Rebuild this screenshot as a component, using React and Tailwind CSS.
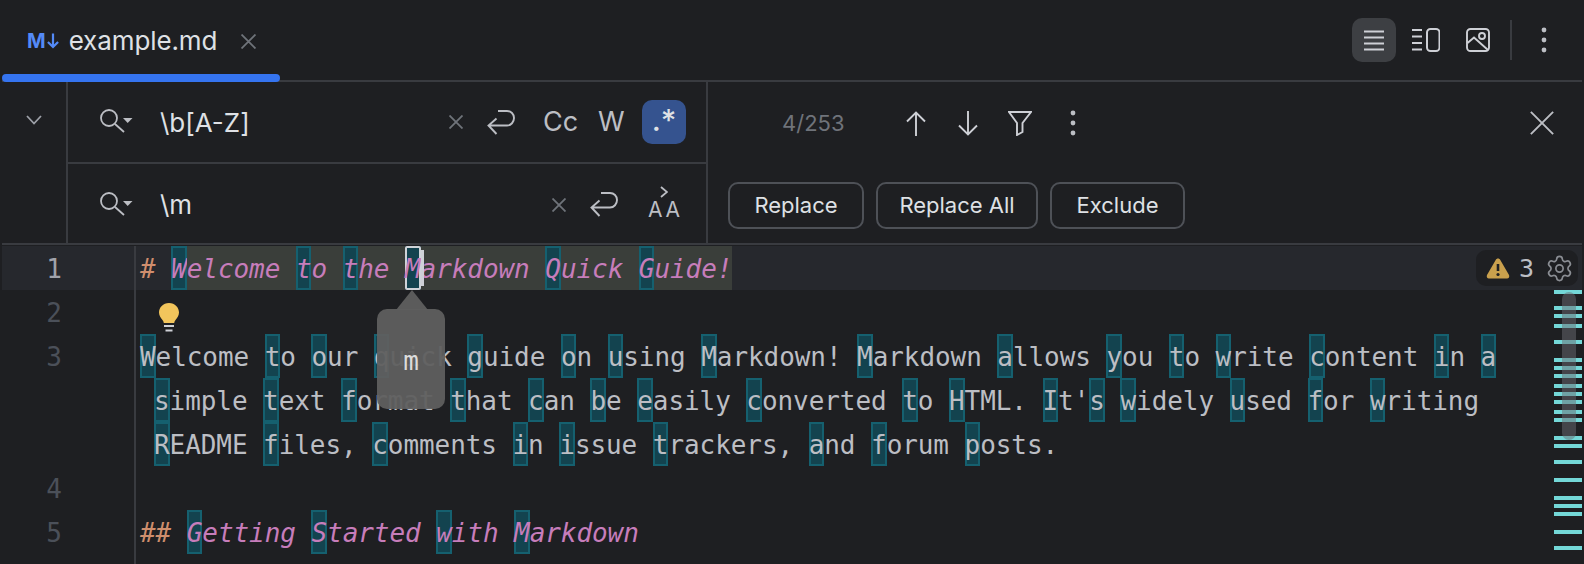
import React from "react";
import { Settings } from "lucide-react";

const MARKS = [290, 306, 314, 324, 340, 358, 366, 374, 384, 392, 400, 410, 418, 436, 444, 460, 478, 496, 504, 512, 530, 546];

function tokens(text) {
  const out = [];
  let i = 0;
  const re = /\b\w/g;
  let m;
  while ((m = re.exec(text))) {
    if (m.index > i) out.push({ t: text.slice(i, m.index), m: false });
    out.push({ t: m[0], m: true });
    i = m.index + 1;
    const next = text.slice(i).search(/\W/);
    if (next < 0) { out.push({ t: text.slice(i), m: false }); i = text.length; break; }
    out.push({ t: text.slice(i, i + next), m: false });
    i += next;
    re.lastIndex = i;
  }
  if (i < text.length) out.push({ t: text.slice(i), m: false });
  return out;
}

const MATCH = "inline-block h-[44px] align-top bg-[#13434f] shadow-[inset_0_0_0_2px_#15606f]";

function Plain({ text }) {
  return tokens(text).map((k, i) =>
    k.m ? <span key={i} className={MATCH}>{k.t}</span> : <span key={i}>{k.t}</span>
  );
}

function Heading({ hashes, text, selected }) {
  let first = true;
  return (
    <>
      <span className="text-[#cf8e6d] italic">{hashes} </span>
      <span className="text-[#c77dbb] italic">
        {tokens(text).map((k, i) => {
          const isFirst = k.m && first;
          if (k.m) first = false;
          if (k.m && selected && k.t === "M") {
            return (
              <span key={i} className="relative inline-block h-[44px] align-top bg-[#13434f] shadow-[inset_0_0_0_2px_#cfd3d8] rounded-[2px]">
                {k.t}
                <span className="absolute left-full top-[4px] h-[36px] w-[3px] bg-[#ced0d6]" />
              </span>
            );
          }
          if (k.m) return <span key={i} className={MATCH}>{k.t}</span>;
          return <span key={i} className={selected && !isFirst ? "inline-block h-[44px] align-top bg-[#3a3e3a]" : ""}>{k.t}</span>;
        })}
      </span>
    </>
  );
}

function Line({ num, children, current, indent }) {
  return (
    <div className={"flex h-[44px] " + (current ? "bg-[#26282d]" : "")}>
      <div className={"w-[134px] h-[44px] shrink-0 border-r-2 border-[#393b40] pr-[72px] text-right leading-[47px] " + (current ? "text-[#a1a3ab]" : "text-[#4b5059]")}>
        {num}
      </div>
      <div className={"h-[44px] leading-[47px] whitespace-pre tracking-[-0.07px] " + (indent ? "pl-[18px]" : "pl-[4px]")}>{children}</div>
    </div>
  );
}

const Cross = ({ size = 14, color = "#6f737a", w = 1.8 }) => (
  <svg width={size} height={size} viewBox="0 0 14 14" fill="none" stroke={color} strokeWidth={(w * 14) / size} className="shrink-0">
    <path d="M0.5 0.5 13.5 13.5M13.5 0.5 0.5 13.5" />
  </svg>
);

const Search = () => (
  <svg width="34" height="30" viewBox="0 0 34 30" fill="none" className="shrink-0">
    <circle cx="10" cy="11" r="8" stroke="#bcbec4" strokeWidth="1.8" />
    <path d="M16 17 25 25" stroke="#bcbec4" strokeWidth="1.8" />
    <path d="M24 11H33.5L28.7 16Z" fill="#bcbec4" />
  </svg>
);

const Enter = () => (
  <svg width="28" height="25" viewBox="0 0 28 25" fill="none" stroke="#bcbec4" strokeWidth="1.9" className="shrink-0">
    <path d="M11 1H20C24 1 27 4 27 8S24 15.500 20 15.500H2M9.500 8.500 1.500 15.500 9.500 24" />
  </svg>
);

const Dots = ({ color = "#bcbec4" }) => (
  <svg width="6" height="26" viewBox="0 0 6 26" className="shrink-0" fill={color}>
    <circle cx="3" cy="3" r="2.400" />
    <circle cx="3" cy="13" r="2.400" />
    <circle cx="3" cy="23" r="2.400" />
  </svg>
);

const BTN = "h-[47px] rounded-[10px] border-2 border-[#4e5157] text-[22px] text-[#dfe1e5] flex items-center justify-center shrink-0";

export default function App() {
  return (
    <div className="w-[1584px] h-[564px] overflow-hidden bg-[#1e1f22] px-[2px] font-['Inter',sans-serif]">
      {/* tab bar */}
      <div className="relative flex items-center h-[82px] border-b-2 border-[#393b40]">
        <div className="flex items-center pl-[25px] pt-[2px]">
          <span className="text-[20px] font-bold leading-none text-[#548af7]">M</span>
          <svg width="12" height="16" viewBox="0 0 13 16" fill="none" stroke="#548af7" strokeWidth="2.400" className="ml-[1px] shrink-0">
            <path d="M6.500 0V14.500M1 9 6.500 14.500 12 9" />
          </svg>
          <span className="ml-[10px] text-[26px] leading-none text-[#dfe1e5] tracking-[-0.1px]">example.md</span>
          <span className="ml-[24px] flex"><Cross size={15} /></span>
        </div>
        <div className="absolute left-0 bottom-[-2px] h-[8px] w-[278px] rounded-full bg-[#3574f0]" />
        <div className="ml-auto mr-[35px] flex items-center">
          <div className="w-[44px] h-[44px] rounded-[10px] bg-[#3d3f43] flex items-center justify-center">
            <svg width="20" height="21" viewBox="0 0 20 21" stroke="#ced0d6" strokeWidth="2"><path d="M0 1.500H20M0 7.500H20M0 13.500H20M0 19.500H20" /></svg>
          </div>
          <svg width="28" height="24" viewBox="0 0 28 24" fill="none" stroke="#ced0d6" strokeWidth="2" className="ml-[16px]">
            <path d="M0 2H10M0 8.500H10M0 15H10M0 21.500H10" />
            <rect x="15" y="1" width="12.500" height="22" rx="3.500" />
          </svg>
          <svg width="24" height="24" viewBox="0 0 24 24" fill="none" stroke="#ced0d6" strokeWidth="1.900" className="ml-[26px]">
            <rect x="1" y="1" width="22" height="22" rx="3.500" />
            <circle cx="16" cy="8" r="3" />
            <path d="M1.500 15 8 9.500 22 22" />
          </svg>
          <div className="ml-[20px] w-[2px] h-[40px] bg-[#393b40]" />
          <div className="ml-[29px] flex"><Dots /></div>
        </div>
      </div>

      {/* find / replace */}
      <div className="flex h-[163px] border-b-2 border-[#393b40]">
        <div className="w-[64px] shrink-0 border-r-2 border-[#393b40] box-content flex justify-center pt-[33px]">
          <svg width="16" height="10" viewBox="0 0 16 10" fill="none" stroke="#9da0a8" strokeWidth="1.800"><path d="M1 1 8 8.500 15 1" /></svg>
        </div>
        <div className="w-[638px] shrink-0 border-r-2 border-[#393b40] box-content">
          <div className="flex items-center h-[80px] border-b-2 border-[#393b40] box-content pl-[31px]">
            <Search />
            <span className="ml-[27px] w-[289px] text-[26px] text-[#dfe1e5] shrink-0">\b[A-Z]</span>
            <Cross size={14} />
            <span className="ml-[24px] flex"><Enter /></span>
            <span className="ml-[28px] w-[34px] text-[27px] text-[#bcbec4] shrink-0">Cc</span>
            <span className="ml-[21px] w-[27px] text-[27px] text-[#bcbec4] shrink-0">W</span>
            <span className="ml-[17px] w-[44px] h-[44px] rounded-[10px] bg-[#35538f] flex items-start justify-center text-[#dfe1e5] text-[30px] leading-[40px] font-medium shrink-0">.*</span>
          </div>
          <div className="flex items-center h-[79px] pl-[31px] pt-[2px]">
            <Search />
            <span className="ml-[27px] w-[392px] text-[26px] text-[#dfe1e5] shrink-0">\m</span>
            <Cross size={14} />
            <span className="ml-[24px] flex"><Enter /></span>
            <span className="relative ml-[30px] flex gap-[3px] text-[21px] leading-none text-[#bcbec4] pt-[9px]">
              <span>A</span><span>A</span>
              <svg width="8" height="12" viewBox="0 0 8 12" fill="none" stroke="#bcbec4" strokeWidth="1.800" className="absolute left-[12px] top-[-4px]"><path d="M1 1 7 6 1 11" /></svg>
            </span>
          </div>
        </div>
        <div className="flex-1">
          <div className="flex items-center h-[82px]">
            <span className="ml-[74px] w-[61px] text-[22px] text-[#6f737a] shrink-0">4/253</span>
            <svg width="20" height="25" viewBox="0 0 20 25" fill="none" stroke="#ced0d6" strokeWidth="1.900" className="ml-[63px] shrink-0"><path d="M10 25V1.500M1 10.500 10 1.500 19 10.500" /></svg>
            <svg width="20" height="25" viewBox="0 0 20 25" fill="none" stroke="#ced0d6" strokeWidth="1.900" className="ml-[32px] shrink-0"><path d="M10 0V23.500M1 14.500 10 23.500 19 14.500" /></svg>
            <svg width="24" height="25" viewBox="0 0 24 25" fill="none" stroke="#ced0d6" strokeWidth="1.900" className="ml-[30px] shrink-0"><path d="M1 1H23L14.500 12V21L9 24V12Z" /></svg>
            <span className="ml-[38px] flex"><Dots /></span>
            <span className="ml-auto mr-[28px] flex"><Cross size={24} color="#bcbec4" w={1.9} /></span>
          </div>
          <div className="flex items-start gap-[12px] pl-[20px] pt-[18px]">
            <button className={BTN + " w-[136px]"}>Replace</button>
            <button className={BTN + " w-[162px]"}>Replace All</button>
            <button className={BTN + " w-[135px]"}>Exclude</button>
          </div>
        </div>
      </div>

      {/* editor */}
      <div className="relative font-['DejaVu_Sans_Mono',monospace] text-[26px] text-[#bcbec4] pt-[1px]">
        <Line num="1" current>
          <Heading hashes="#" text="Welcome to the Markdown Quick Guide!" selected />
        </Line>
        <Line num="2">
          <svg width="22" height="30" viewBox="0 0 22 30" className="inline-block align-top mt-[13px] ml-[18px]">
            <path d="M11 0C5 0 1 4.500 1 9.500c0 3.500 2 5.500 3.500 7.500.8 1.200 1.200 2 1.300 3h10.400c.1-1 .5-1.800 1.300-3C19 15 21 13 21 9.500 21 4.500 17 0 11 0Z" fill="#f2c55c" />
            <path d="M6 23H16M7.500 27.500H14.500" stroke="#ced0d6" strokeWidth="2" />
          </svg>
        </Line>
        <Line num="3"><Plain text="Welcome to our quick guide on using Markdown! Markdown allows you to write content in a" /></Line>
        <Line indent><Plain text="simple text format that can be easily converted to HTML. It's widely used for writing" /></Line>
        <Line indent><Plain text="README files, comments in issue trackers, and forum posts." /></Line>
        <Line num="4" />
        <Line num="5"><Heading hashes="##" text="Getting Started with Markdown" /></Line>
        <div className="w-[134px] h-[12px] border-r-2 border-[#393b40]" />

        {/* caret hint tooltip */}
        <div className="absolute left-[394px] top-[45px] h-[20px] w-[32px] bg-[#5f5f5f]/95 [clip-path:polygon(50%_0,100%_100%,0_100%)]" />
        <div className="absolute left-[375px] top-[64px] w-[68px] h-[100px] rounded-[10px] bg-[#5f5f5f]/95 flex items-center justify-center text-[#dcdcdc] pt-[4px]">m</div>

        {/* inspection widget */}
        <div className="absolute right-[4px] top-[5px] w-[102px] h-[36px] rounded-[10px] bg-[#1e1f22] flex items-center font-['DejaVu_Sans_Mono',monospace]">
          <svg width="24" height="22" viewBox="0 0 24 22" className="ml-[10px] shrink-0">
            <path d="M12 1.500c-1 0-1.800.5-2.300 1.500L1 18c-.8 1.700.2 3.500 2 3.500h18c1.800 0 2.800-1.800 2-3.500L14.300 3c-.5-1-1.300-1.500-2.300-1.500Z" fill="#c9a04d" />
            <path d="M12 7V14" stroke="#1e1f22" strokeWidth="2.600" />
            <circle cx="12" cy="17.500" r="1.600" fill="#1e1f22" />
          </svg>
          <span className="ml-[9px] text-[25px] leading-none text-[#bcbec4]">3</span>
          <span className="ml-[11px] flex"><Settings size={29} strokeWidth={1.400} color="#8a8d93" /></span>
        </div>
      </div>

      {/* error stripes + scrollbar */}
      {MARKS.map((t) => (
        <div key={t} className="absolute left-[1554px] w-[28px] h-[4px] bg-[#74d8d8]" style={{ top: t }} />
      ))}
      <div className="absolute left-[1562px] top-[292px] w-[14px] h-[148px] rounded-full bg-[#6a6c72]/50" />
    </div>
  );
}
